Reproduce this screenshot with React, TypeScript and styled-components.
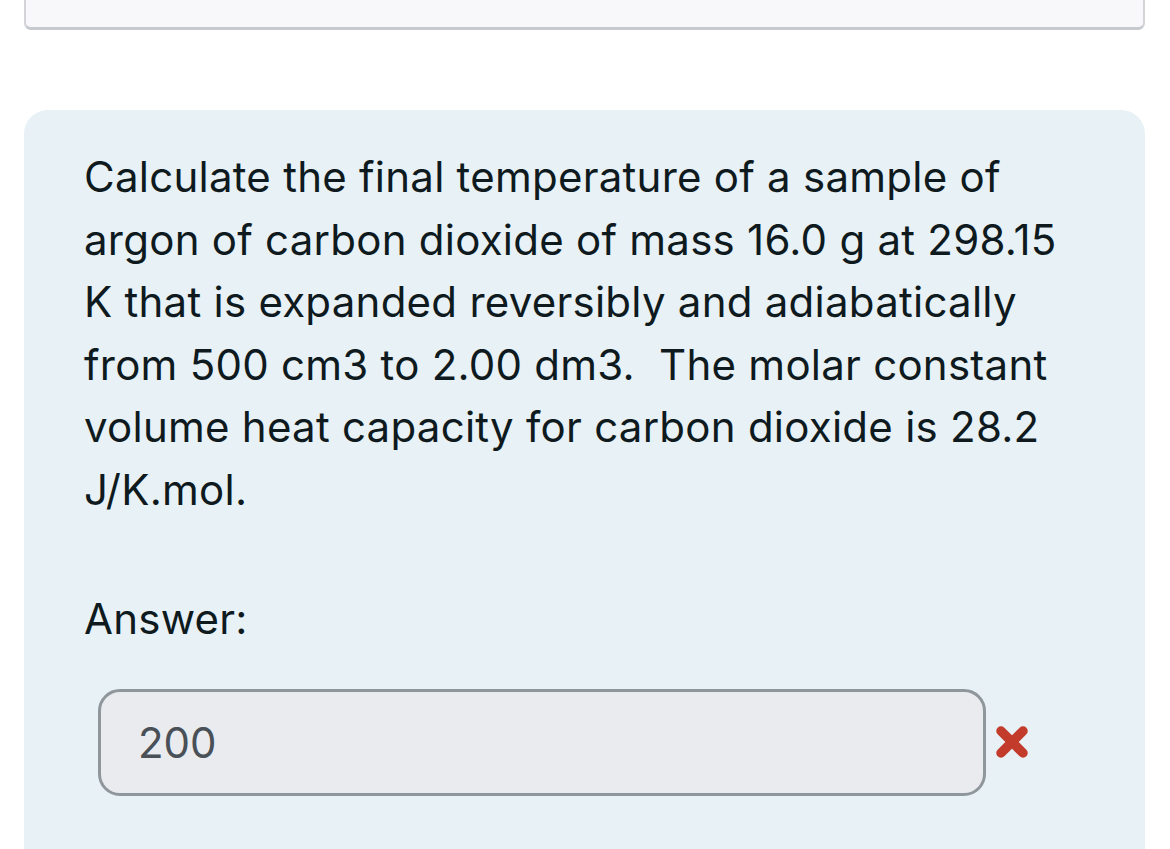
import React from "react";
import styled, { createGlobalStyle } from "styled-components";

const Global = createGlobalStyle`
  html, body { margin: 0; padding: 0; background: #ffffff; overflow: hidden; }
  body { font-family: Inter, "Noto Sans", "Liberation Sans", sans-serif; color: #0f1b1f; }
`;

const Page = styled.div`
  width: 1170px;
  height: 849px;
  padding: 0 25px 0 24px;
  box-sizing: border-box;
  display: flex;
  flex-direction: column;
  gap: 80px;
  overflow: hidden;
`;

const PrevBox = styled.div`
  flex: none;
  margin-top: -40px;
  height: 70px;
  box-sizing: border-box;
  background: #f8f8fb;
  border: 2px solid #d2d4d8;
  border-bottom: 3px solid #c6c9ce;
  border-radius: 7px;
`;

const Card = styled.section`
  flex: none;
  background: #e8f1f5;
  border-radius: 24px;
  padding: 36px 60px 120px 60px;
  box-sizing: border-box;
`;

const Question = styled.p`
  margin: 0;
  font-size: 42px;
  line-height: 62.6px;
  letter-spacing: 0.25px;
  color: #0e1a1e;
`;

const Label = styled.div`
  margin-top: 66px;
  font-size: 42px;
  line-height: 62px;
  letter-spacing: 0.25px;
  color: #0e1a1e;
`;

const AnswerRow = styled.div`
  margin-top: 39px;
  display: flex;
  align-items: center;
  gap: 8px;
  padding-left: 14px;
`;

const Input = styled.div`
  width: 888px;
  height: 107px;
  box-sizing: border-box;
  background: #e9ebef;
  border: 3px solid #8f979c;
  border-radius: 22px;
  display: flex;
  align-items: center;
  padding-left: 37px;
  font-size: 42px;
  color: #495057;
`;

const Cross = styled.svg`
  width: 36px;
  height: 36px;
  flex: none;
`;

export default function App() {
  return (
    <>
      <Global />
      <Page>
        <PrevBox />
        <Card>
          <Question>
            Calculate the final temperature of a sample of argon of carbon dioxide of mass 16.0 g at 298.15 K that is
            expanded reversibly and adiabatically from 500 cm3 to 2.00 dm3.{"\u00a0 "}The molar constant volume heat
            capacity for carbon dioxide is 28.2 J/K.mol.
          </Question>
          <Label>Answer:</Label>
          <AnswerRow>
            <Input>200</Input>
            <Cross viewBox="0 0 36 36" aria-label="Incorrect">
              <path d="M7 7 L29 29 M29 7 L7 29" stroke="#c23b2b" strokeWidth="9.5" strokeLinecap="round" />
            </Cross>
          </AnswerRow>
        </Card>
      </Page>
    </>
  );
}
